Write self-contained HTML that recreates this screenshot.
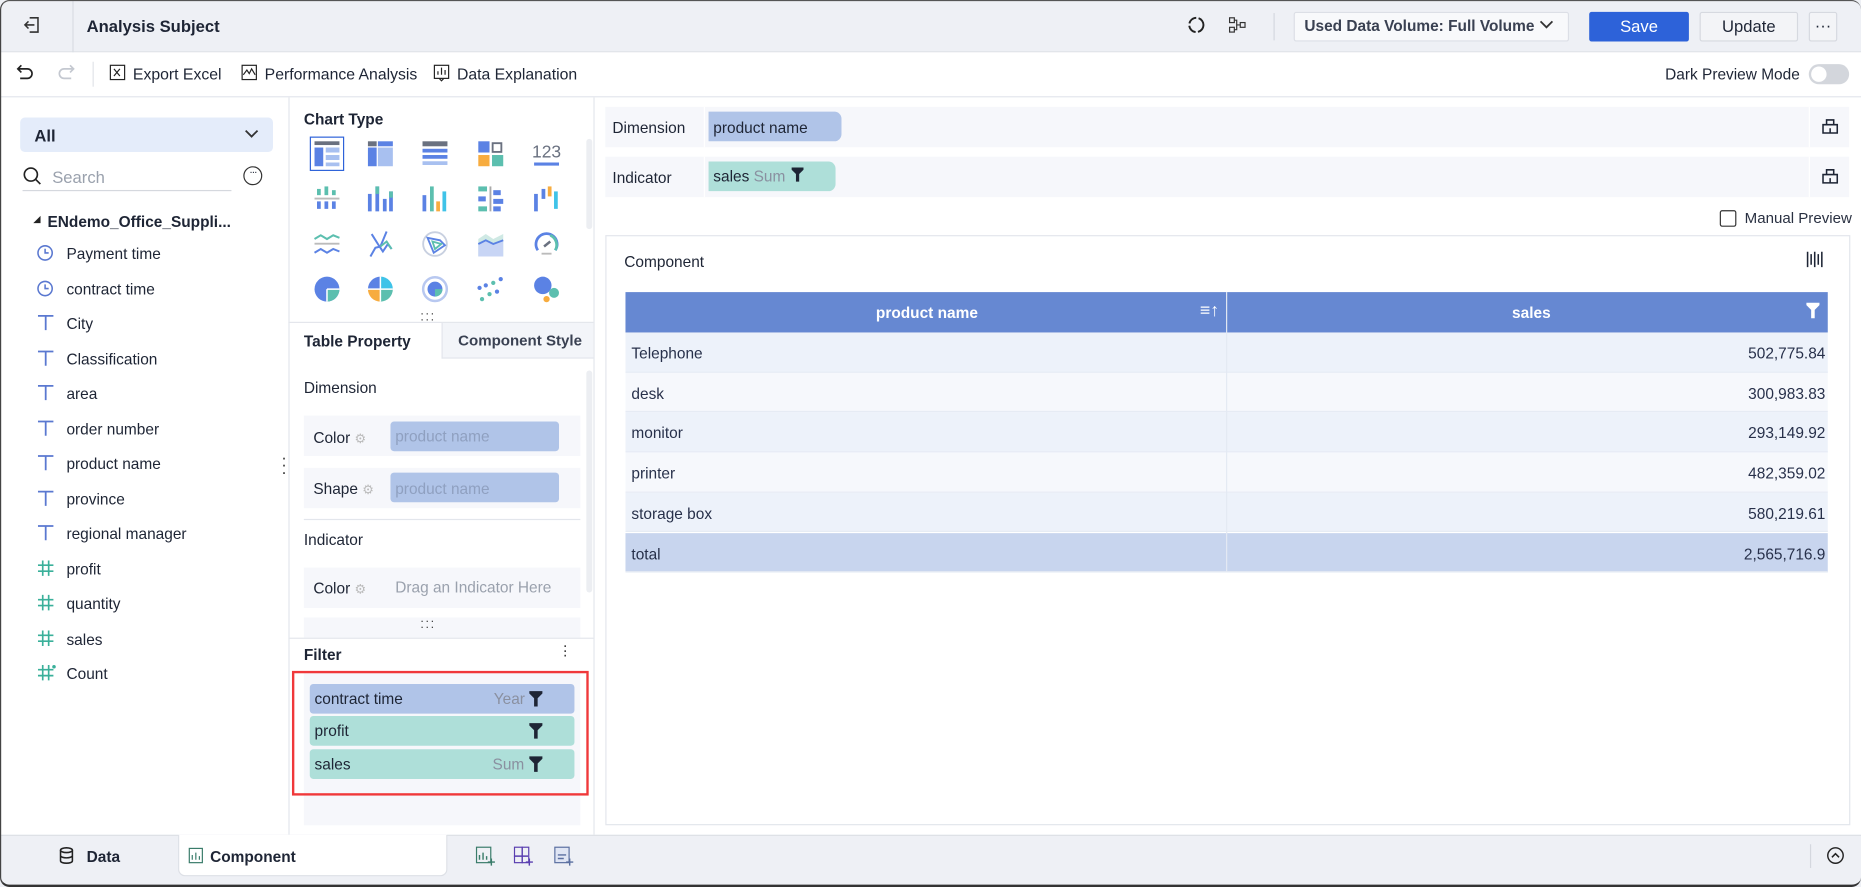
<!DOCTYPE html>
<html><head><meta charset="utf-8"><style>
*{box-sizing:border-box;margin:0;padding:0}
html,body{width:1861px;height:887px;overflow:hidden;background:#fff}
body{font-family:"Liberation Sans",Arial,sans-serif;color:#1e2535;font-size:13px}
#s{position:absolute;left:0;top:0;width:1568px;height:747px;transform:scale(1.18686,1.18742);transform-origin:0 0;background:#fff;overflow:hidden}
.a{position:absolute}
.t{position:absolute;white-space:nowrap}
.b{font-weight:bold}
svg{position:absolute;overflow:visible}
</style></head><body><div id="s">
<div class="a" style="left:0;top:0;width:1568px;height:747px;border-left:1px solid #444;border-bottom:2px solid #333;border-top:1px solid #555;border-radius:8px;z-index:50;pointer-events:none"></div>

<div class="a" style="left:0;top:0;width:1568px;height:44px;background:#eef0f5;border-bottom:1px solid #e1e4ea"></div>
<svg style="left:19px;top:13px" width="16" height="16" viewBox="0 0 16 16"><path d="M6 2h7v12H6M10 8H2M5 5L2 8l3 3" fill="none" stroke="#333" stroke-width="1.3"/></svg>
<div class="a" style="left:61px;top:0;width:1px;height:44px;background:#d9dce3"></div>
<div class="t b" style="left:73px;top:14px;font-size:14px">Analysis Subject</div>
<svg style="left:1000px;top:13px" width="16" height="16" viewBox="0 0 16 16"><circle cx="8" cy="8" r="6" fill="none" stroke="#222" stroke-width="1.6" stroke-dasharray="8 2"/></svg>
<svg style="left:1034px;top:13px" width="18" height="16" viewBox="0 0 18 16"><rect x="2" y="2" width="4" height="4" fill="none" stroke="#333"/><rect x="2" y="10" width="4" height="4" fill="none" stroke="#333"/><rect x="11" y="6" width="4" height="4" fill="none" stroke="#333"/><path d="M6 4h2v8H6M8 8h3" fill="none" stroke="#333"/></svg>
<div class="a" style="left:1073px;top:11px;width:1px;height:23px;background:#d4d7de"></div>
<div class="a" style="left:1090px;top:10px;width:232px;height:25px;background:#f8f9fb;border:1px solid #dcdfe6;border-radius:2px"></div>
<div class="t b" style="left:1099px;top:14px;font-size:13px;color:#3a4152">Used Data Volume: Full Volume</div>
<svg style="left:1297px;top:16px" width="12" height="10" viewBox="0 0 12 10"><path d="M1 2l5 5 5-5" fill="none" stroke="#333" stroke-width="1.5"/></svg>
<div class="a" style="left:1339px;top:10px;width:84px;height:25px;background:#2d62d9;border-radius:2px;color:#fff;text-align:center;line-height:25px;font-size:14px">Save</div>
<div class="a" style="left:1432px;top:10px;width:83px;height:25px;background:#f3f4f7;border:1px solid #d6d9e0;border-radius:2px;text-align:center;line-height:23px;font-size:14px">Update</div>
<div class="a" style="left:1524px;top:10px;width:24px;height:25px;background:#f3f4f7;border:1px solid #d6d9e0;border-radius:2px;text-align:center;line-height:20px;font-size:14px">···</div>

<div class="a" style="left:0;top:81px;width:1568px;height:1px;background:#e3e6ec"></div>
<svg style="left:14px;top:54px" width="16" height="14" viewBox="0 0 16 14"><path d="M4 1L1 4l3 3M1 4h8a4 4 0 010 8H3" fill="none" stroke="#222" stroke-width="1.4"/></svg>
<svg style="left:47px;top:54px" width="16" height="14" viewBox="0 0 16 14"><path d="M12 1l3 3-3 3M15 4H7a4 4 0 000 8h6" fill="none" stroke="#c4c8d0" stroke-width="1.4"/></svg>
<div class="a" style="left:78px;top:52px;width:1px;height:21px;background:#e0e3e8"></div>
<svg style="left:92px;top:54px" width="14" height="14" viewBox="0 0 14 14"><rect x="1" y="1" width="12" height="12" fill="none" stroke="#222"/><path d="M4 4l5 6M9 4l-5 6" stroke="#222"/></svg>
<div class="t" style="left:112px;top:55px;font-size:13.3px">Export Excel</div>
<svg style="left:203px;top:54px" width="14" height="14" viewBox="0 0 14 14"><rect x="1" y="1" width="12" height="12" fill="none" stroke="#222"/><path d="M2 9l3-4 2 3 2-4 3 5" fill="none" stroke="#222"/></svg>
<div class="t" style="left:223px;top:55px;font-size:13.3px">Performance Analysis</div>
<svg style="left:365px;top:54px" width="14" height="15" viewBox="0 0 14 15"><rect x="1" y="1" width="12" height="11" fill="none" stroke="#222"/><path d="M4 9V6M7 9V3M10 9V5M5 12l2 2 2-2" fill="none" stroke="#222"/></svg>
<div class="t" style="left:385px;top:55px;font-size:13.3px">Data Explanation</div>
<div class="t" style="left:1403px;top:55px;font-size:13px">Dark Preview Mode</div>
<div class="a" style="left:1524px;top:54px;width:34px;height:17px;background:#d3d6dc;border-radius:9px"></div>
<div class="a" style="left:1526px;top:56px;width:13px;height:13px;background:#fff;border-radius:50%"></div>

<div class="a" style="left:243px;top:82px;width:1px;height:621px;background:#e3e6ec"></div>
<div class="a" style="left:17px;top:99px;width:213px;height:29px;background:#e4ecfa;border-radius:4px"></div>
<div class="t b" style="left:29px;top:106px;font-size:14px">All</div>
<svg style="left:206px;top:109px" width="12" height="9" viewBox="0 0 12 9"><path d="M1 1l5 5 5-5" fill="none" stroke="#333" stroke-width="1.5"/></svg>
<svg style="left:19px;top:140px" width="16" height="16" viewBox="0 0 16 16"><circle cx="7" cy="7" r="5.5" fill="none" stroke="#222" stroke-width="1.4"/><path d="M11 11l4 4" stroke="#222" stroke-width="1.4"/></svg>
<div class="t" style="left:44px;top:141px;font-size:14px;color:#9aa1ad">Search</div>
<div class="a" style="left:19px;top:160px;width:176px;height:1px;background:#d5d8de"></div>
<div class="a" style="left:205px;top:140px;width:16px;height:16px;border:1.3px solid #333;border-radius:50%;font-size:9px;line-height:9px;text-align:center;letter-spacing:-1px">···</div>
<div class="t" style="left:28px;top:180px;font-size:8px;color:#222">◢</div>
<div class="t b" style="left:40px;top:179px;font-size:13px">ENdemo_Office_Suppli...</div>
<div id="tree"></div>
<div class="t" style="left:237px;top:382px;font-size:14px;line-height:6px;color:#333">·<br>·<br>·</div>

<div class="a" style="left:500px;top:82px;width:1px;height:621px;background:#e3e6ec"></div>
<div class="t b" style="left:256px;top:93px;font-size:13px">Chart Type</div>
<div class="a" style="left:494px;top:117px;width:5px;height:76px;background:#eceef2;border-radius:3px"></div>
<div class="a" style="left:261px;top:115px;width:29px;height:29px;border:1.5px solid #2d62d9"></div>
<div id="charts"></div>
<div class="t" style="left:354px;top:262px;font-size:10px;line-height:5px;color:#333;letter-spacing:1px">···<br>···</div>
<div class="a" style="left:243px;top:271px;width:257px;height:1px;background:#e3e6ec"></div>
<div class="a" style="left:372px;top:272px;width:128px;height:30px;background:#f3f5f9;border-left:1px solid #e3e6ec;border-bottom:1px solid #e3e6ec"></div>
<div class="t b" style="left:256px;top:280px;font-size:13px">Table Property</div>
<div class="t b" style="left:386px;top:280px;font-size:12.7px;color:#3a4152">Component Style</div>
<div class="a" style="left:494px;top:312px;width:5px;height:187px;background:#eceef2;border-radius:3px"></div>
<div class="t" style="left:256px;top:319px;font-size:13px">Dimension</div>
<div class="a" style="left:256px;top:350px;width:233px;height:34px;background:#f6f7fb"></div>
<div class="t" style="left:264px;top:361px;font-size:13px">Color <span style="color:#bbb;font-size:11px">⚙</span></div>
<div class="a" style="left:329px;top:355px;width:142px;height:25px;background:#b0c4e8;border-radius:3px"></div>
<div class="t" style="left:333px;top:360px;font-size:13px;color:#8fa0c0">product name</div>
<div class="a" style="left:256px;top:394px;width:233px;height:34px;background:#f6f7fb"></div>
<div class="t" style="left:264px;top:404px;font-size:13px">Shape <span style="color:#bbb;font-size:11px">⚙</span></div>
<div class="a" style="left:329px;top:398px;width:142px;height:25px;background:#b0c4e8;border-radius:3px"></div>
<div class="t" style="left:333px;top:404px;font-size:13px;color:#8fa0c0">product name</div>
<div class="a" style="left:256px;top:437px;width:233px;height:1px;background:#e3e6ec"></div>
<div class="t" style="left:256px;top:447px;font-size:13px">Indicator</div>
<div class="a" style="left:256px;top:478px;width:233px;height:34px;background:#f6f7fb"></div>
<div class="t" style="left:264px;top:488px;font-size:13px">Color <span style="color:#bbb;font-size:11px">⚙</span></div>
<div class="t" style="left:333px;top:487px;font-size:13px;color:#9aa1ad">Drag an Indicator Here</div>
<div class="a" style="left:256px;top:520px;width:233px;height:17px;background:#f6f7fb"></div>
<div class="t" style="left:354px;top:521px;font-size:10px;line-height:5px;color:#333;letter-spacing:1px">···<br>···</div>
<div class="a" style="left:243px;top:537px;width:257px;height:1px;background:#e3e6ec"></div>
<div class="t b" style="left:256px;top:544px;font-size:13px">Filter</div>
<div class="t" style="left:474px;top:542px;font-size:13px;line-height:4px;color:#333">·<br>·<br>·</div>
<div class="a" style="left:256px;top:566px;width:233px;height:129px;background:#f6f7fb"></div>
<div class="a" style="left:246px;top:565px;width:250px;height:105px;border:2px solid #f0383a"></div>
<div class="a" style="left:261px;top:576px;width:223px;height:25px;background:#b0c4e8;border-radius:3px"></div>
<div class="t" style="left:265px;top:581px;font-size:13px">contract time</div>
<div class="t" style="left:416px;top:581px;font-size:13px;color:#8a90a0">Year</div>
<div class="a" style="left:261px;top:603px;width:223px;height:25px;background:#aedfd9;border-radius:3px"></div>
<div class="t" style="left:265px;top:608px;font-size:13px">profit</div>
<div class="a" style="left:261px;top:631px;width:223px;height:25px;background:#aedfd9;border-radius:3px"></div>
<div class="t" style="left:265px;top:636px;font-size:13px">sales</div>
<div class="t" style="left:415px;top:636px;font-size:13px;color:#8a90a0">Sum</div>
<svg style="left:446px;top:582px" width="11" height="13" viewBox="0 0 11 13"><path d="M0 0h11v2L7 6v7H4V6L0 2z" fill="#1e2535"/></svg>
<svg style="left:446px;top:609px" width="11" height="13" viewBox="0 0 11 13"><path d="M0 0h11v2L7 6v7H4V6L0 2z" fill="#1e2535"/></svg>
<svg style="left:446px;top:637px" width="11" height="13" viewBox="0 0 11 13"><path d="M0 0h11v2L7 6v7H4V6L0 2z" fill="#1e2535"/></svg>

<div class="a" style="left:510px;top:90px;width:1048px;height:34px;background:#f6f7fb"></div>
<div class="a" style="left:593px;top:90px;width:1px;height:34px;background:#fff"></div>
<div class="a" style="left:1524px;top:90px;width:1px;height:34px;background:#fff"></div>
<div class="t" style="left:516px;top:100px;font-size:13px">Dimension</div>
<div class="a" style="left:597px;top:94px;width:112px;height:25px;background:#b0c4e8;border-radius:0 6px 6px 0"></div>
<div class="t" style="left:601px;top:100px;font-size:13px">product name</div>
<div class="a" style="left:510px;top:132px;width:1048px;height:34px;background:#f6f7fb"></div>
<div class="a" style="left:593px;top:132px;width:1px;height:34px;background:#fff"></div>
<div class="a" style="left:1524px;top:132px;width:1px;height:34px;background:#fff"></div>
<div class="t" style="left:516px;top:142px;font-size:13px">Indicator</div>
<div class="a" style="left:597px;top:136px;width:107px;height:25px;background:#aedfd9;border-radius:0 6px 6px 0"></div>
<div class="t" style="left:601px;top:141px;font-size:13px">sales <span style="color:#8a90a0">Sum</span></div>
<svg style="left:667px;top:141px" width="10" height="12" viewBox="0 0 11 13"><path d="M0 0h11v2L7 6v7H4V6L0 2z" fill="#1e2535"/></svg>
<svg style="left:1535px;top:99px" width="14" height="14" viewBox="0 0 14 14"><path d="M1 6h12v7H1zM4 6V2h6v4M7 9v4" fill="none" stroke="#1e2535" stroke-width="1.3"/></svg>
<svg style="left:1535px;top:141px" width="14" height="14" viewBox="0 0 14 14"><path d="M1 6h12v7H1zM4 6V2h6v4M7 9v4" fill="none" stroke="#1e2535" stroke-width="1.3"/></svg>
<div class="a" style="left:1449px;top:177px;width:14px;height:14px;border:1.2px solid #333;border-radius:2px"></div>
<div class="t" style="left:1470px;top:177px;font-size:12.7px;color:#2a3142">Manual Preview</div>
<div class="a" style="left:510px;top:198px;width:1049px;height:497px;border:1px solid #e3e6ec"></div>
<div class="t" style="left:526px;top:213px;font-size:13px">Component</div>
<svg style="left:1522px;top:212px" width="14" height="13" viewBox="0 0 14 13"><path d="M1 0v13M4 2v9M7 0v13M10 2v9M13 0v13" stroke="#1e2535" stroke-width="1.3"/></svg>
<div class="a" style="left:527px;top:246px;width:1013px;height:34px;background:#6688d2"></div>
<div class="a" style="left:1033px;top:246px;width:1px;height:236px;background:#e4e9f3"></div>
<div class="t b" style="left:738px;top:256px;font-size:13px;color:#fff">product name</div>
<div class="t b" style="left:1274px;top:256px;font-size:13px;color:#fff">sales</div>
<div class="t" style="left:1011px;top:253px;font-size:15px;color:#fff">≡↑</div>
<svg style="left:1522px;top:255px" width="11" height="13" viewBox="0 0 11 13"><path d="M0 0h11v2L7 6v7H4V6L0 2z" fill="#fff"/></svg>
<div id="rows"></div>

<div class="a" style="left:0;top:703px;width:1568px;height:44px;background:#eef0f5;border-top:1px solid #dde0e6"></div>
<div class="a" style="left:150px;top:703px;width:227px;height:35px;background:#fff;border:1px solid #dde0e6;border-top:none;border-radius:0 0 6px 6px"></div>
<svg style="left:50px;top:713px" width="12" height="15" viewBox="0 0 12 15"><ellipse cx="6" cy="3" rx="5" ry="2" fill="none" stroke="#222" stroke-width="1.3"/><path d="M1 3v9c0 2.6 10 2.6 10 0V3M1 7.5c0 2.6 10 2.6 10 0" fill="none" stroke="#222" stroke-width="1.3"/></svg>
<div class="t b" style="left:73px;top:714px;font-size:13px">Data</div>
<svg style="left:159px;top:714px" width="12" height="13" viewBox="0 0 12 13"><rect x="0.5" y="0.5" width="11" height="12" fill="none" stroke="#3a7c6a"/><path d="M3 10V6M6 10V4M9 10V7" stroke="#3a7c6a"/></svg>
<div class="t b" style="left:177px;top:714px;font-size:13px">Component</div>
<svg style="left:401px;top:713px" width="16" height="16" viewBox="0 0 16 16"><rect x="0.5" y="0.5" width="12" height="13" fill="none" stroke="#3a7c6a"/><path d="M3 11V7M6 11V5M9 11V8M13 10v6M10 13h6" stroke="#3a7c6a" stroke-width="1.2"/></svg>
<svg style="left:433px;top:713px" width="16" height="16" viewBox="0 0 16 16"><rect x="0.5" y="0.5" width="12" height="13" fill="none" stroke="#5a3fb0"/><path d="M0 8h12M7 0v14M13 10v6M10 13h6" stroke="#5a3fb0" stroke-width="1.2"/></svg>
<svg style="left:467px;top:713px" width="16" height="16" viewBox="0 0 16 16"><rect x="0.5" y="0.5" width="12" height="13" fill="#dfe5f4" stroke="#5a6fa0"/><path d="M3 7h7M3 10h5M13 10v6M10 13h6" stroke="#5a6fa0" stroke-width="1.2"/></svg>
<div class="a" style="left:1525px;top:711px;width:1px;height:20px;background:#d4d7de"></div>
<svg style="left:1539px;top:713px" width="15" height="15" viewBox="0 0 15 15"><circle cx="7.5" cy="7.5" r="6.5" fill="none" stroke="#222" stroke-width="1.2"/><path d="M4.5 9l3-3 3 3" fill="none" stroke="#222" stroke-width="1.3"/></svg>

<script>
var tree=[["c","Payment time"],["c","contract time"],["t","City"],["t","Classification"],["t","area"],["t","order number"],["t","product name"],["t","province"],["t","regional manager"],["h","profit"],["h","quantity"],["h","sales"],["h*","Count"]];
var h="";tree.forEach(function(it,i){var y=213+i*29.5;
var ic;if(it[0]=="c")ic='<svg style="left:31px;top:'+(y-7)+'px" width="14" height="14" viewBox="0 0 14 14"><circle cx="7" cy="7" r="6" fill="none" stroke="#5a78d0" stroke-width="1.3"/><path d="M7 3.5V7h3" fill="none" stroke="#5a78d0" stroke-width="1.3"/></svg>';
else if(it[0]=="t")ic='<svg style="left:32px;top:'+(y-7)+'px" width="13" height="13" viewBox="0 0 13 13"><path d="M0 1h13M6.5 1v12" stroke="#5a78d0" stroke-width="1.5"/></svg>';
else ic='<svg style="left:32px;top:'+(y-7)+'px" width="15" height="14" viewBox="0 0 15 14"><path d="M4 0v13M9 0v13M0 4h13M0 9h13" stroke="#3ab09a" stroke-width="1.4"/>'+(it[0]=="h*"?'<circle cx="13.5" cy="1.5" r="1.5" fill="#3ab09a"/>':'')+'</svg>';
h+=ic+'<div class="t" style="left:56px;top:'+(y-7)+'px;font-size:13px">'+it[1]+'</div>';});
document.getElementById("tree").outerHTML=h;
var B="#5b82e4",G="#5cbfaf",O="#f7ac3f",L="#a8c0f0",D="#6a7180",C="#3fc3e8";
var ic=[
'<rect x="0" y="0" width="20" height="3" fill="'+D+'"/><rect x="0" y="5" width="7" height="15" fill="'+B+'"/><rect x="9" y="5" width="11" height="4" fill="'+L+'"/><rect x="9" y="11" width="11" height="4" fill="'+L+'"/><rect x="9" y="17" width="11" height="3" fill="'+L+'"/>',
'<rect x="0" y="0" width="7" height="4" fill="'+D+'"/><rect x="8" y="0" width="12" height="4" fill="'+B+'"/><rect x="0" y="5" width="7" height="15" fill="'+B+'"/><rect x="8" y="5" width="12" height="15" fill="'+L+'"/>',
'<rect x="0" y="0" width="20" height="4" fill="'+D+'"/><rect x="0" y="6" width="20" height="3" fill="'+B+'"/><rect x="0" y="11" width="20" height="3" fill="'+B+'"/><rect x="0" y="16" width="20" height="3" fill="'+L+'"/>',
'<rect x="0" y="0" width="9" height="9" fill="'+B+'"/><rect x="11.5" y="1.5" width="7" height="7" fill="none" stroke="'+D+'" stroke-width="1.5"/><rect x="0" y="11" width="9" height="9" fill="'+O+'"/><rect x="11" y="11" width="9" height="9" fill="'+G+'"/>',
'<text x="10" y="13" font-size="14" text-anchor="middle" fill="'+D+'" font-family="Liberation Sans">123</text><rect x="0" y="17" width="20" height="2.5" fill="'+B+'"/>',
'<rect x="2" y="2" width="3" height="5" fill="'+G+'"/><rect x="8" y="0" width="3" height="7" fill="'+G+'"/><rect x="14" y="3" width="3" height="4" fill="'+G+'"/><rect x="0" y="9" width="20" height="1.5" fill="#bbb"/><rect x="2" y="12" width="3" height="6" fill="'+B+'"/><rect x="8" y="12" width="3" height="6" fill="'+B+'"/><rect x="14" y="12" width="3" height="6" fill="'+B+'"/>',
'<rect x="0" y="6" width="3" height="14" fill="'+B+'"/><rect x="6" y="0" width="3" height="20" fill="'+B+'"/><rect x="6" y="0" width="3" height="6" fill="'+G+'"/><rect x="12" y="10" width="3" height="10" fill="'+B+'"/><rect x="17" y="4" width="3" height="16" fill="'+B+'"/><rect x="17" y="4" width="3" height="5" fill="'+G+'"/>',
'<rect x="0" y="7" width="3" height="13" fill="'+B+'"/><rect x="6" y="0" width="3" height="20" fill="'+G+'"/><rect x="11" y="12" width="3" height="8" fill="'+O+'"/><rect x="16" y="4" width="3" height="16" fill="'+C+'"/>',
'<rect x="0" y="0" width="7" height="4" fill="'+G+'"/><rect x="0" y="8" width="6" height="4" fill="'+B+'"/><rect x="0" y="16" width="7" height="4" fill="'+G+'"/><rect x="9" y="0" width="1.5" height="20" fill="#aaa"/><rect x="12" y="3" width="6" height="4" fill="'+B+'"/><rect x="12" y="10" width="8" height="4" fill="'+B+'"/><rect x="12" y="16" width="6" height="4" fill="'+B+'"/>',
'<rect x="0" y="6" width="3" height="14" fill="'+B+'"/><rect x="6" y="2" width="3" height="8" fill="'+B+'"/><rect x="11" y="0" width="3" height="8" fill="'+O+'"/><rect x="16" y="4" width="3" height="14" fill="'+C+'"/>',
'<path d="M0 6l5-3 5 3 5-3 5 2" fill="none" stroke="'+G+'" stroke-width="1.6"/><rect x="0" y="9" width="20" height="1.5" fill="#bbb"/><path d="M0 17l5-3 5 3 5-3 5 2" fill="none" stroke="'+B+'" stroke-width="1.6"/>',
'<path d="M2 20l4-7 4-1 5-12M3 2l5 8 4 6 4-6 3 4" fill="none" stroke="'+B+'" stroke-width="1.6"/><path d="M10 12l5-4 4 6" fill="none" stroke="'+G+'" stroke-width="1.6"/>',
'<circle cx="10" cy="10" r="9.5" fill="none" stroke="#c8d0e0" stroke-width="1.5"/><path d="M4 5l10 2 4 4-9 6z" fill="none" stroke="'+B+'" stroke-width="1.5"/><path d="M8 8l7 2-5 4z" fill="none" stroke="'+G+'" stroke-width="1.5"/>',
'<path d="M0 6l6-4 6 4 8-4v18H0z" fill="#cfe9e4"/><path d="M0 10l6-3 6 3 8-3v13H0z" fill="#c8d5f5"/><path d="M0 10l6-3 6 3 8-3" fill="none" stroke="'+B+'" stroke-width="1.5"/>',
'<path d="M3 15A8.5 8.5 0 1 1 17 15" fill="none" stroke="'+B+'" stroke-width="2.2"/><path d="M13 3A8.5 8.5 0 0 1 17 15" fill="none" stroke="'+G+'" stroke-width="2.2"/><path d="M8 12l5-4" stroke="'+D+'" stroke-width="2"/><rect x="6" y="17" width="8" height="1.5" fill="#bbb"/>',
'<circle cx="10" cy="10" r="10" fill="'+B+'"/><path d="M10 10h10a10 10 0 0 1-10 10z" fill="'+G+'"/><path d="M10 10h10M10 10v10" stroke="#fff" stroke-width="1.2"/>',
'<path d="M10 10V0a10 10 0 0 0-10 10z" fill="'+B+'"/><path d="M10 10V0a10 10 0 0 1 10 10z" fill="'+C+'"/><path d="M10 10H0a10 10 0 0 0 10 10z" fill="'+O+'"/><path d="M10 10h10a10 10 0 0 1-10 10z" fill="'+G+'"/><path d="M10 0v20M0 10h20" stroke="#fff" stroke-width="1.2"/>',
'<circle cx="10" cy="10" r="9.5" fill="none" stroke="#b8c8f0" stroke-width="2"/><circle cx="10" cy="10" r="6" fill="'+B+'"/><path d="M10 10h6a6 6 0 0 1-6 6z" fill="'+G+'"/>',
'<circle cx="18" cy="2" r="1.7" fill="'+B+'"/><circle cx="12" cy="5" r="1.7" fill="'+G+'"/><circle cx="6" cy="7" r="1.7" fill="'+B+'"/><circle cx="1" cy="9" r="1.7" fill="'+B+'"/><circle cx="15" cy="12" r="1.7" fill="'+B+'"/><circle cx="9" cy="14" r="1.7" fill="'+G+'"/><circle cx="3" cy="18" r="1.7" fill="'+G+'"/>',
'<circle cx="7" cy="7" r="7" fill="'+B+'"/><circle cx="16" cy="13" r="4" fill="'+G+'"/><circle cx="10" cy="18" r="2.5" fill="'+O+'"/>'];
var xs=[265,310,356,403,450],ys=[119,157,195,233],o="";
ic.forEach(function(s,i){o+='<svg style="left:'+xs[i%5]+'px;top:'+ys[Math.floor(i/5)]+'px" width="21" height="21" viewBox="0 0 20 20">'+s+'</svg>';});
document.getElementById("charts").outerHTML=o;
var R=[["Telephone","502,775.84"],["desk","300,983.83"],["monitor","293,149.92"],["printer","482,359.02"],["storage box","580,219.61"],["total","2,565,716.9"]];
var r="";R.forEach(function(x,i){var y=280+i*33.7;var bg=i==5?"#c8d5ee":(i%2?"#f6f8fc":"#edf2fa");
r+='<div class="a" style="left:527px;top:'+y+'px;width:1013px;height:33.7px;background:'+bg+';border-bottom:1px solid #e6ebf4"></div><div class="t" style="left:532px;top:'+(y+10)+'px;font-size:13px;color:#27304a">'+x[0]+'</div><div class="t" style="right:30px;top:'+(y+10)+'px;font-size:13px;color:#27304a">'+x[1]+'</div>';});
r+='<div class="a" style="left:1033px;top:280px;width:1px;height:202px;background:#e4e9f3"></div>';
document.getElementById("rows").outerHTML=r;
</script>
</div></body></html>
